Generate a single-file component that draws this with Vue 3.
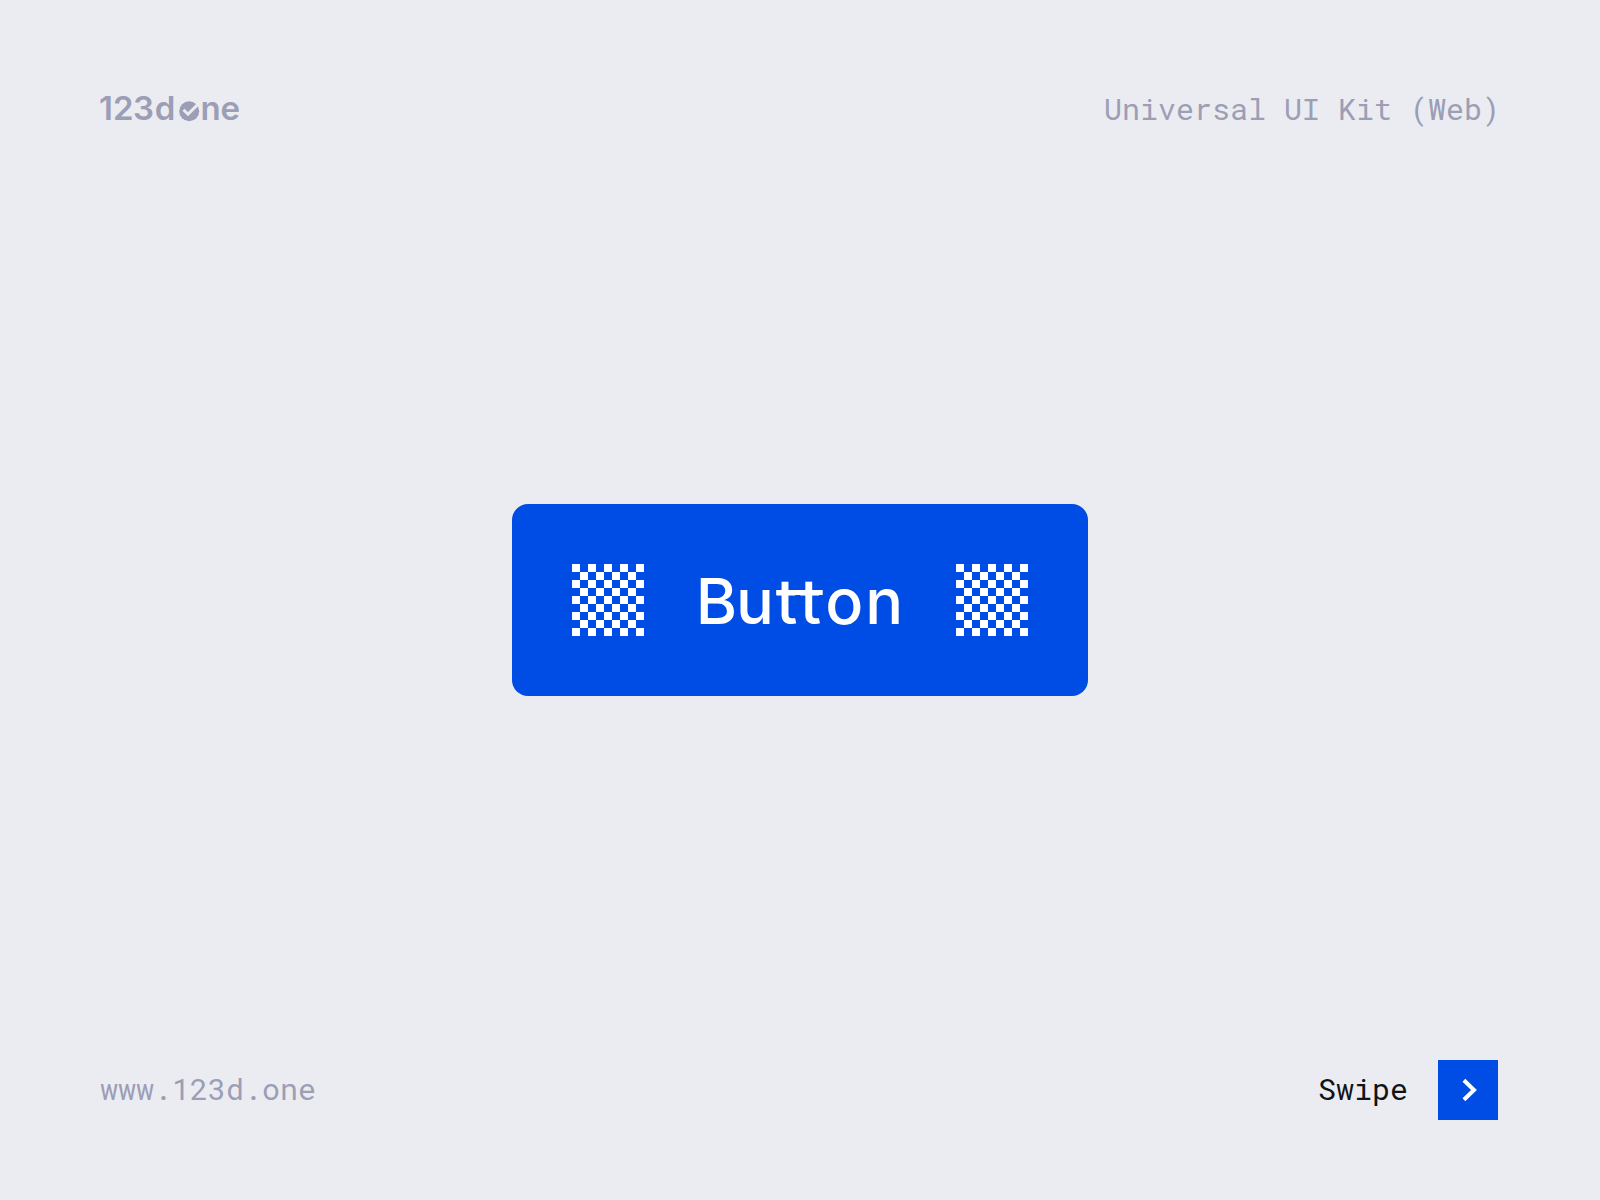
<template>
  <main class="slide">
    <header class="row">
      <svg class="logo" viewBox="0 0 142 60">
        <text x="-1 12.9 33 54.7" y="40.2">123d</text>
        <circle cx="89.2" cy="31.2" r="10" />
        <path class="tick" d="M83.5 29.7L88 34.2L99.8 22.4" />
        <text x="100.4 120.5" y="40.2">ne</text>
      </svg>
      <div class="title">Universal UI Kit (Web)</div>
    </header>

    <button class="button" type="button">
      <svg class="icon" viewBox="0 0 9 9" shape-rendering="crispEdges">
        <rect v-for="c in cells" :key="c.id" :x="c.x" :y="c.y" width="1" height="1" />
      </svg>
      <svg class="label" viewBox="0 0 208 96">
        <text x="-0.2 40 80 103.8 129.2 169.2" y="72.3">Button</text>
        <!-- shared crossbar of the double t -->
        <rect x="80.3" y="38" width="46.4" height="5" />
      </svg>
      <svg class="icon" viewBox="0 0 9 9" shape-rendering="crispEdges">
        <rect v-for="c in cells" :key="c.id" :x="c.x" :y="c.y" width="1" height="1" />
      </svg>
    </button>

    <footer class="row footer">
      <div class="site">www.123d.one</div>
      <div class="swipe">
        <span>Swipe</span>
        <a class="next" href="#">
          <svg viewBox="0 0 60 60"><path d="M25.9 20.2L36 30L25.9 39.8" /></svg>
        </a>
      </div>
    </footer>
  </main>
</template>

<script setup>
const cells = [];

for (let y = 0; y < 9; y++) {
  for (let x = 0; x < 9; x++) {
    if ((x + y) % 2 === 0) cells.push({ id: `${x}-${y}`, x, y });
  }
}
</script>

<style>
body {
  margin: 0;
}
</style>

<style scoped>
.slide {
  box-sizing: border-box;
  width: 1600px;
  height: 1200px;
  padding: 80px 100px;
  display: flex;
  flex-direction: column;
  justify-content: space-between;
  align-items: center;
  background: #ebecf1;
  color: #9b9eb5;
  font-family: "Roboto Mono", "Liberation Mono", monospace;
  font-size: 30px;
  line-height: 58px;
}
.row {
  width: 100%;
  height: 60px;
  display: flex;
  justify-content: space-between;
  align-items: flex-start;
}
.footer {
  box-sizing: border-box;
  padding-right: 2px;
}
.logo {
  width: 142px;
  height: 60px;
  overflow: visible;
  fill: #9b9eb5;
  font-family: Inter, sans-serif;
  font-size: 33px;
  font-weight: 600;
}
.tick {
  fill: none;
  stroke: #ebecf1;
  stroke-width: 3;
}
.button {
  width: 576px;
  height: 192px;
  padding: 0 60px;
  border: 0;
  border-radius: 16px;
  display: flex;
  justify-content: space-between;
  align-items: center;
  background: #004de6;
  color: #fff;
}
.icon {
  width: 72px;
  height: 72px;
  fill: #fff;
}
.label {
  width: 208px;
  height: 96px;
  overflow: visible;
  fill: #fff;
  font-family: Inter, sans-serif;
  font-size: 63px;
  font-weight: 500;
}
.swipe {
  display: flex;
  gap: 30px;
  color: #111317;
}
.next {
  width: 60px;
  height: 60px;
  background: #004de6;
}
.next svg {
  display: block;
  fill: none;
  stroke: #fff;
  stroke-width: 4;
}
</style>
